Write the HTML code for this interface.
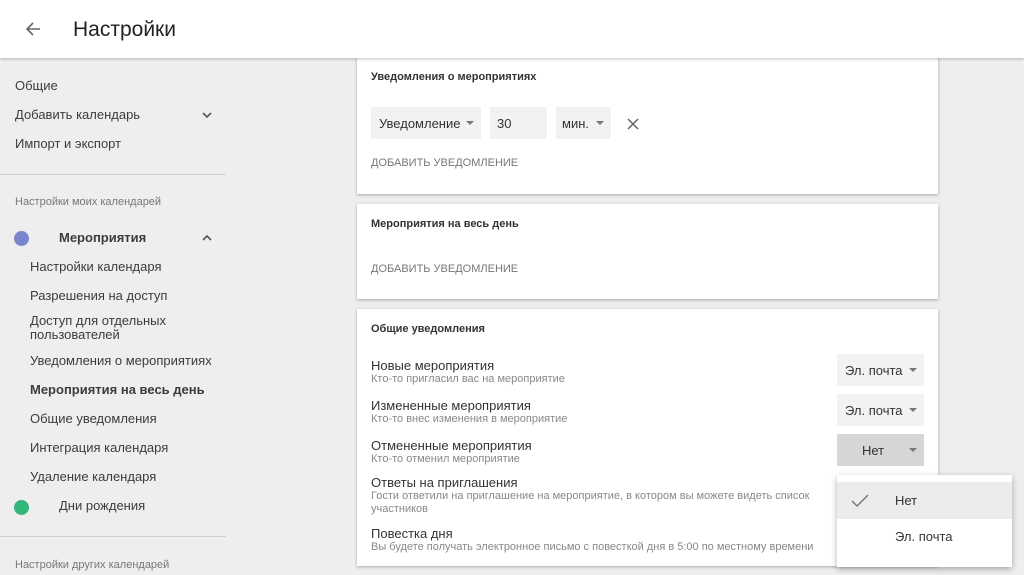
<!DOCTYPE html>
<html><head><meta charset="utf-8"><style>
*{margin:0;padding:0;box-sizing:border-box}
body{width:1024px;height:575px;overflow:hidden;background:#eeeeee;font-family:"Liberation Sans","Noto Sans CJK SC",sans-serif;color:#3c3c3c;position:relative}
.a{position:absolute;white-space:nowrap}
.hdr{position:absolute;left:0;top:0;width:1024px;height:58px;background:#fff;box-shadow:0 1px 3px rgba(0,0,0,.25);z-index:5}
.nav{font-size:13px;color:#3c3c3c}
.card{position:absolute;left:357px;width:581px;background:#fff;box-shadow:0 1px 3px rgba(0,0,0,.3)}
.sel{position:absolute;background:#f2f2f2;font-size:13px;color:#333}
.tri{position:absolute;width:0;height:0;border-left:4px solid transparent;border-right:4px solid transparent;border-top:4px solid #777}
.t{font-size:13px;color:#333}
.s{font-size:11px;color:#888}
</style></head><body>
<div class="hdr">
<svg class="a" style="left:24px;top:20px" width="18" height="18" viewBox="0 0 18 18"><path d="M16 9H3M9 3L3 9l6 6" stroke="#666" stroke-width="1.6" fill="none"/></svg>
<div class="a" style="left:73px;top:18px;font-size:21px;color:#222">Настройки</div>
</div>
<div class="a nav" style="left:15px;top:78px">Общие</div>
<div class="a nav" style="left:15px;top:107px">Добавить календарь</div>
<svg class="a" style="left:202px;top:111px" width="10" height="8"><path d="M1 2l4 4 4-4" stroke="#555" stroke-width="1.6" fill="none"/></svg>
<div class="a nav" style="left:15px;top:136px">Импорт и экспорт</div>
<div class="a" style="left:0;top:174px;width:226px;height:1px;background:#d0d0d0"></div>
<div class="a" style="left:15px;top:196px;font-size:11px;color:#777">Настройки моих календарей</div>
<div class="a" style="left:14px;top:231px;width:15px;height:15px;border-radius:50%;background:#7986cb"></div>
<div class="a nav" style="left:59px;top:230px;font-weight:bold">Мероприятия</div>
<svg class="a" style="left:202px;top:234px" width="10" height="8"><path d="M1 6l4-4 4 4" stroke="#555" stroke-width="1.6" fill="none"/></svg>
<div class="a nav" style="left:30px;top:259px">Настройки календаря</div>
<div class="a nav" style="left:30px;top:288px">Разрешения на доступ</div>
<div class="a nav" style="left:30px;top:314px;line-height:14px">Доступ для отдельных<br>пользователей</div>
<div class="a nav" style="left:30px;top:353px">Уведомления о мероприятиях</div>
<div class="a nav" style="left:30px;top:382px;font-weight:bold">Мероприятия на весь день</div>
<div class="a nav" style="left:30px;top:411px">Общие уведомления</div>
<div class="a nav" style="left:30px;top:440px">Интеграция календаря</div>
<div class="a nav" style="left:30px;top:469px">Удаление календаря</div>
<div class="a" style="left:14px;top:500px;width:15px;height:15px;border-radius:50%;background:#33b679"></div>
<div class="a nav" style="left:59px;top:498px">Дни рождения</div>
<div class="a" style="left:0;top:536px;width:226px;height:1px;background:#d0d0d0"></div>
<div class="a" style="left:15px;top:559px;font-size:11px;color:#777">Настройки других календарей</div>

<div class="card" style="top:40px;height:154px">
<div class="a" style="left:14px;top:31px;font-size:11px;font-weight:bold;color:#333">Уведомления о мероприятиях</div>
<div class="sel" style="left:14px;top:67px;width:110px;height:32px"><span class="a" style="left:8px;top:9px">Уведомление</span><span class="tri" style="left:95px;top:14px"></span></div>
<div class="sel" style="left:133px;top:67px;width:57px;height:32px"><span class="a" style="left:7px;top:9px">30</span></div>
<div class="sel" style="left:199px;top:67px;width:55px;height:32px"><span class="a" style="left:6px;top:9px">мин.</span><span class="tri" style="left:40px;top:14px"></span></div>
<svg class="a" style="left:270px;top:78px" width="12" height="12"><path d="M1 1l10 10M11 1L1 11" stroke="#666" stroke-width="1.5"/></svg>
<div class="a" style="left:14px;top:117px;font-size:11px;color:#777">ДОБАВИТЬ УВЕДОМЛЕНИЕ</div>
</div>
<div class="card" style="top:204px;height:95px">
<div class="a" style="left:14px;top:14px;font-size:11px;font-weight:bold;color:#333">Мероприятия на весь день</div>
<div class="a" style="left:14px;top:59px;font-size:11px;color:#777">ДОБАВИТЬ УВЕДОМЛЕНИЕ</div>
</div>
<div class="card" style="top:309px;height:257px">
<div class="a" style="left:14px;top:14px;font-size:11px;font-weight:bold;color:#333">Общие уведомления</div>
<div class="a t" style="left:14px;top:49px">Новые мероприятия</div>
<div class="a s" style="left:14px;top:64px">Кто-то пригласил вас на мероприятие</div>
<div class="a t" style="left:14px;top:89px">Измененные мероприятия</div>
<div class="a s" style="left:14px;top:104px">Кто-то внес изменения в мероприятие</div>
<div class="a t" style="left:14px;top:129px">Отмененные мероприятия</div>
<div class="a s" style="left:14px;top:144px">Кто-то отменил мероприятие</div>
<div class="a t" style="left:14px;top:166px">Ответы на приглашения</div>
<div class="a s" style="left:14px;top:181px;line-height:13px">Гости ответили на приглашение на мероприятие, в котором вы можете видеть список<br>участников</div>
<div class="a t" style="left:14px;top:217px">Повестка дня</div>
<div class="a s" style="left:14px;top:232px">Вы будете получать электронное письмо с повесткой дня в 5:00 по местному времени</div>
<div class="sel" style="left:480px;top:45px;width:87px;height:32px"><span class="a" style="left:8px;top:9px">Эл. почта</span><span class="tri" style="left:72px;top:14px"></span></div>
<div class="sel" style="left:480px;top:85px;width:87px;height:32px"><span class="a" style="left:8px;top:9px">Эл. почта</span><span class="tri" style="left:72px;top:14px"></span></div>
<div class="sel" style="left:480px;top:125px;width:87px;height:32px;background:#d6d6d6"><span class="a" style="left:25px;top:9px">Нет</span><span class="tri" style="left:72px;top:14px"></span></div>
</div>
<div class="a" style="left:837px;top:475px;width:175px;height:92px;background:#fff;box-shadow:0 2px 6px rgba(0,0,0,.3);z-index:6">
<div class="a" style="left:0;top:7px;width:175px;height:37px;background:#ececec"></div>
<svg class="a" style="left:14px;top:19px" width="18" height="14"><path d="M1 7l5 5L17 1" stroke="#777" stroke-width="1.5" fill="none"/></svg>
<div class="a t" style="left:58px;top:18px">Нет</div>
<div class="a t" style="left:58px;top:54px">Эл. почта</div>
</div>
</body></html>
